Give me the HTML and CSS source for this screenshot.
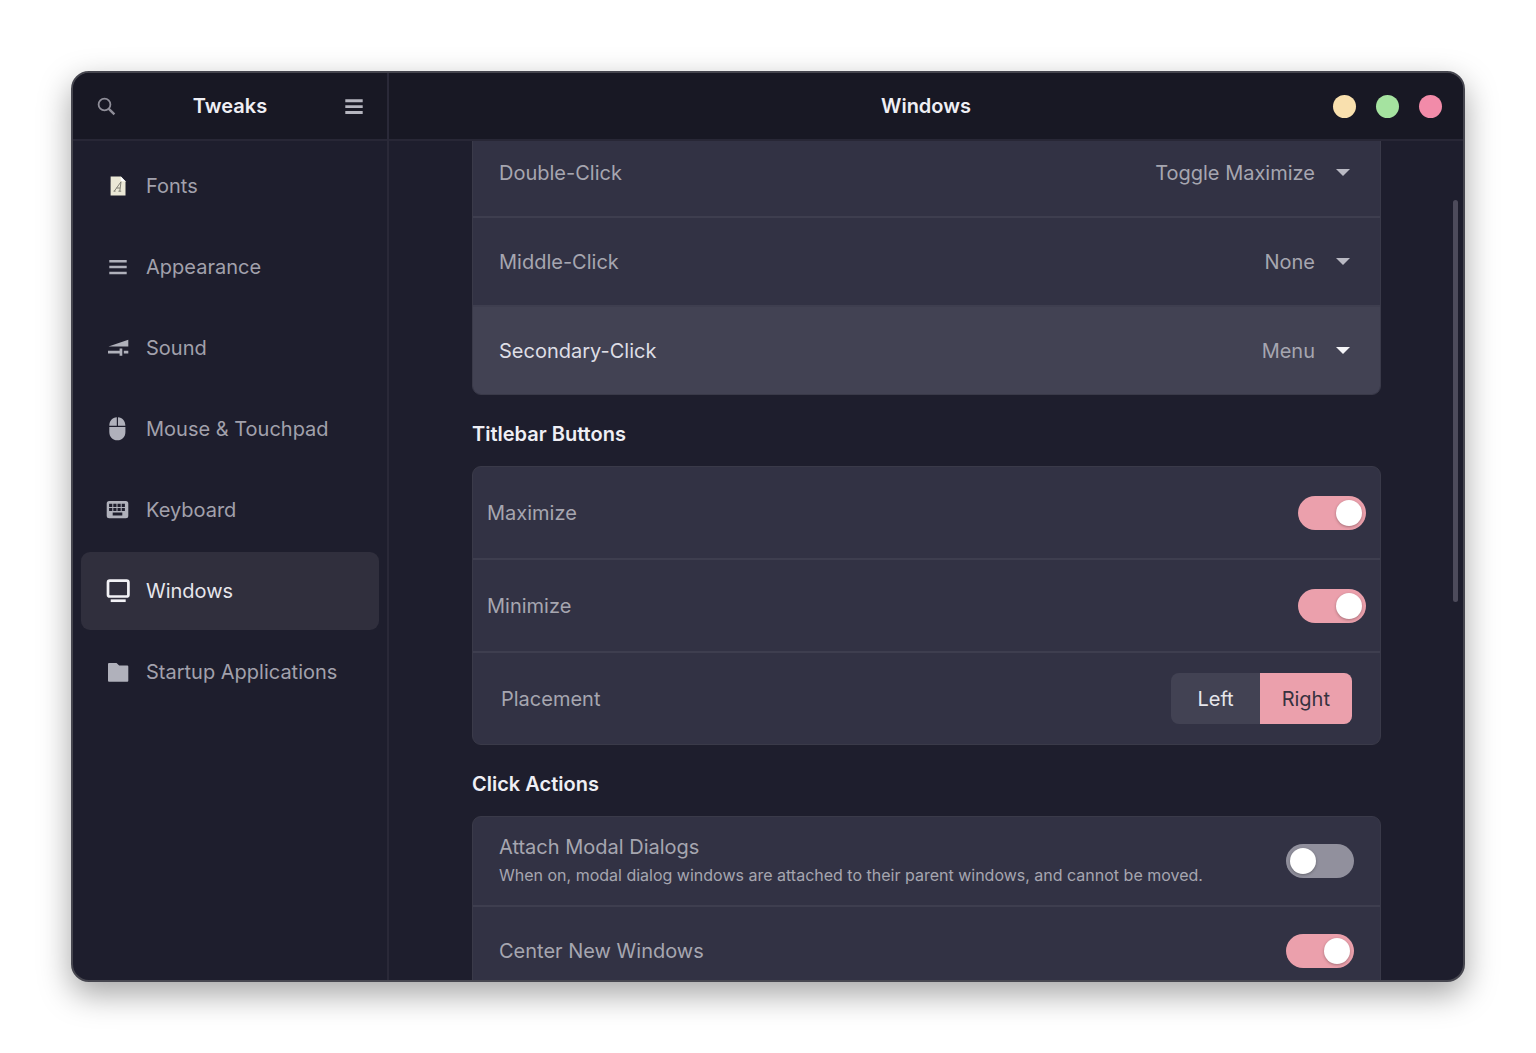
FILE: index.html
```html
<!DOCTYPE html>
<html lang="en">
<head>
  <meta charset="UTF-8" />
  <meta name="viewport" content="width=device-width, initial-scale=1.0" />
  <title>Tweaks</title>
  <link rel="stylesheet" href="styles.css">
</head>
<body>
  <div class="window">
    <aside class="sidebar">
      <header class="headerbar">
        <button class="icon-button search" type="button" aria-label="Search">
          <svg viewBox="0 0 24 24" fill="none" stroke="currentColor" stroke-width="1.8">
            <circle cx="10.5" cy="10.5" r="5.9"/>
            <path d="M14.6 14.6 20.4 20.4" stroke-width="2.4"/>
          </svg>
        </button>
        <h1>Tweaks</h1>
        <button class="icon-button menu" type="button" aria-label="Menu">
          <svg viewBox="0 0 24 24" fill="currentColor">
            <path d="M3.3 5.3h17.4v2.9H3.3zM3.3 11.2h17.4v2.9H3.3zM3.3 17.1h17.4V20H3.3z"/>
          </svg>
        </button>
      </header>
      <nav>
        <a href="#fonts">
          <svg viewBox="0 0 24 24">
            <path d="M4.6 2.6h10.2l4.7 4.7v14.3H4.6z" fill="#ebe8d6"/>
            <path d="M14.8 2.6v4.7h4.7z" fill="#fff"/>
            <path d="M7.5 17.2h2M8.4 17 15 7.8l-1.2 9.4M10.5 14h3.6M12.4 17.2h2.8" fill="none" stroke="#77766c" stroke-width="0.9"/>
          </svg>
          Fonts
        </a>
        <a href="#appearance">
          <svg viewBox="0 0 24 24" fill="currentColor">
            <path d="M3.3 4.9h17.4v2.5H3.3zM3.3 10.8h17.4v2.5H3.3zM3.3 16.7h17.4v2.5H3.3z"/>
          </svg>
          Appearance
        </a>
        <a href="#sound">
          <svg viewBox="0 0 24 24" fill="currentColor">
            <path d="M2.5 10.4 22.3 3.8v6.6zM2 14.8h11.6v-2.2h2.7v7.2h-2.7v-2.4H2zM17.8 14.8h4.5v2.6h-4.5z"/>
          </svg>
          Sound
        </a>
        <a href="#mouse">
          <svg viewBox="0 0 24 24" fill="currentColor">
            <path d="M3.3 8.8C3.4 3.8 6.3.6 10.8.3v8.5zM12 .3c4.4.3 7.2 3.5 7.4 8.5H12zM3.3 10h16.1v5c0 5-3.4 8.3-8 8.3S3.3 20 3.3 15z"/>
          </svg>
          Mouse &amp; Touchpad
        </a>
        <a href="#keyboard">
          <svg viewBox="0 0 24 24" fill="currentColor">
            <path fill-rule="evenodd" d="M3.2 3h16.6a2.5 2.5 0 0 1 2.5 2.5v12.3a2.5 2.5 0 0 1-2.5 2.5H3.2a2.5 2.5 0 0 1-2.5-2.5V5.5A2.5 2.5 0 0 1 3.2 3zM3.1 5.8v3.1h3.2V5.8zM7.3 5.8v3.1h3.2V5.8zM11.5 5.8v3.1h3.2V5.8zM15.7 5.8v3.1h3.2V5.8zM3.1 10v3h3.2v-3zM7.3 10v3h3.2v-3zM11.5 10v3h3.2v-3zM15.7 10v3h3.2v-3zM6.7 14.4v3h9.6v-3z"/>
          </svg>
          Keyboard
        </a>
        <a href="#windows" class="active" aria-current="page">
          <svg viewBox="0 0 24 24" fill="none" stroke="currentColor" stroke-width="2.7">
            <rect x="2" y="1.7" width="20.4" height="15.8" rx="1.8"/>
            <path d="M4.7 21.7h15"/>
          </svg>
          Windows
        </a>
        <a href="#startup">
          <svg viewBox="0 0 24 24" fill="currentColor">
            <path d="M3 3h7.5l2.7 2.5h8.1a1 1 0 0 1 1 1v14.2a1 1 0 0 1-1 1H3a1 1 0 0 1-1-1V4a1 1 0 0 1 1-1z"/>
          </svg>
          Startup Applications
        </a>
      </nav>
    </aside>

    <main class="main">
      <header class="headerbar">
        <h1>Windows</h1>
        <div class="window-controls">
          <button class="minimize" type="button" aria-label="Minimize window"></button>
          <button class="maximize" type="button" aria-label="Maximize window"></button>
          <button class="close" type="button" aria-label="Close window"></button>
        </div>
      </header>

      <div class="content">
        <section class="card actions">
          <div class="row">
            <label for="double-click">Double-Click</label>
            <select id="double-click">
              <option>Toggle Maximize</option>
              <option>None</option>
              <option>Menu</option>
            </select>
            <svg class="arrow" viewBox="0 0 14 8" fill="currentColor"><path d="M0 0h14L7 7z"/></svg>
          </div>
          <div class="row">
            <label for="middle-click">Middle-Click</label>
            <select id="middle-click">
              <option>Toggle Maximize</option>
              <option selected>None</option>
              <option>Menu</option>
            </select>
            <svg class="arrow" viewBox="0 0 14 8" fill="currentColor"><path d="M0 0h14L7 7z"/></svg>
          </div>
          <div class="row hover">
            <label for="secondary-click">Secondary-Click</label>
            <select id="secondary-click">
              <option>Toggle Maximize</option>
              <option>None</option>
              <option selected>Menu</option>
            </select>
            <svg class="arrow" viewBox="0 0 14 8" fill="currentColor"><path d="M0 0h14L7 7z"/></svg>
          </div>
        </section>

        <h2>Titlebar Buttons</h2>
        <section class="card buttons">
          <div class="row">
            <label for="show-maximize">Maximize</label>
            <input type="checkbox" class="switch" id="show-maximize" checked>
          </div>
          <div class="row">
            <label for="show-minimize">Minimize</label>
            <input type="checkbox" class="switch" id="show-minimize" checked>
          </div>
          <div class="row placement">
            <span class="label" id="placement-label">Placement</span>
            <div class="segmented" role="group" aria-labelledby="placement-label">
              <button type="button" aria-pressed="false">Left</button>
              <button type="button" class="selected" aria-pressed="true">Right</button>
            </div>
          </div>
        </section>

        <h2>Click Actions</h2>
        <section class="card clicks">
          <div class="row">
            <label for="attach-modal">
              Attach Modal Dialogs
              <small>When on, modal dialog windows are attached to their parent windows, and cannot be moved.</small>
            </label>
            <input type="checkbox" class="switch" id="attach-modal">
          </div>
          <div class="row">
            <label for="center-new">Center New Windows</label>
            <input type="checkbox" class="switch" id="center-new" checked>
          </div>
        </section>
        <div class="scroll-thumb"></div>
      </div>
    </main>
  </div>
</body>
</html>
```

FILE: styles.css
```css
* {
  box-sizing: border-box;
}
body {
  margin: 0;
  padding: 71px;
  background-color: #ffffff;
  color: #a6a6b0;
  font-family: 'Inter', sans-serif;
  font-size: 20px;
  line-height: 28px;
}
h1, h2 {
  margin: 0;
  color: #efeff5;
  font-size: 20px;
  font-weight: 600;
}
button, select {
  border: none;
  padding: 0;
  background: none;
  color: inherit;
  font: inherit;
}
svg {
  display: block;
  flex: none;
}

.window {
  display: flex;
  height: calc(100vh - 142px);
  border: 2px solid #46464f;
  border-radius: 18px;
  background-color: #1e1e2d;
  box-shadow: 0 12px 32px rgba(0, 0, 0, 0.36);
  overflow: hidden;
}
.headerbar {
  display: flex;
  align-items: center;
  height: 68px;
  flex: none;
  background-color: #181824;
  border-bottom: 2px solid #282736;
}

/* sidebar */
.sidebar {
  width: 316px;
  flex: none;
  border-right: 2px solid #2a2938;
}
.sidebar .headerbar {
  justify-content: space-between;
  padding: 0 21px;
}
.icon-button {
  width: 24px;
  height: 24px;
  color: #b5b5bf;
}
.icon-button.search {
  color: #8f8e99;
}
nav {
  display: flex;
  flex-direction: column;
  gap: 3px;
  padding: 6px 8px;
}
nav a {
  display: flex;
  align-items: center;
  gap: 16px;
  height: 78px;
  padding: 0 25px;
  border-radius: 9px;
  color: #a2a1ac;
  text-decoration: none;
}
nav svg {
  width: 24px;
  height: 24px;
  color: #b0b1bb;
}
nav a.active {
  background-color: #302f3d;
  color: #e6e6ec;
}
nav a.active svg {
  color: #f2f2f6;
}

/* main pane */
.main {
  display: flex;
  flex-direction: column;
  flex: 1;
  min-width: 0;
}
.main .headerbar {
  display: grid;
  grid-template-columns: 1fr auto 1fr;
  padding: 0 21px;
}
.main h1 {
  grid-column: 2;
}
.window-controls {
  display: flex;
  justify-content: flex-end;
  gap: 20px;
}
.window-controls button {
  width: 23px;
  height: 23px;
  border-radius: 50%;
}
.minimize {
  background-color: #f9e0ae;
}
.maximize {
  background-color: #a5e3a0;
}
.close {
  background-color: #f28ba9;
}

.content {
  position: relative;
  flex: 1;
  min-height: 0;
  padding: 0 82px 0 83px;
  overflow: hidden;
}
.scroll-thumb {
  position: absolute;
  top: 7%;
  right: 5px;
  width: 5px;
  height: 48%;
  border-radius: 3px;
  background-color: #4d4b5b;
}
h2 {
  margin: 25px 0 18px;
}

.card {
  border: 1px solid #3a3a49;
  border-radius: 9px;
  background-color: #323244;
  overflow: hidden;
}
.row {
  display: flex;
  align-items: center;
  box-sizing: content-box;
  border-bottom: 2px solid #3e3e4f;
}
.row:last-child {
  border-bottom: none;
}
.row label, .row .label {
  flex: 1;
}

/* list is scrolled down a little */
.actions {
  margin-top: -13px;
}
.actions .row {
  height: 87px;
  padding: 0 30px 0 26px;
}
.actions .hover {
  background-color: #424253;
}
.hover label {
  color: #dedee5;
}
.hover .arrow {
  color: #f5f5f8;
}
select {
  appearance: none;
  text-align-last: right;
}
.arrow {
  width: 14px;
  height: 8px;
  margin-left: 21px;
  color: #b9b9c3;
}

.buttons .row {
  height: 91px;
  padding: 0 14px;
}
.buttons .placement {
  padding: 0 28px;
}
.clicks .row {
  height: 88px;
  padding: 0 26px;
}
small {
  display: block;
  font-size: 16px;
}

.switch {
  appearance: none;
  width: 68px;
  height: 34px;
  margin: 0;
  padding: 4px;
  border-radius: 17px;
  background-color: #91909d;
}
.switch::before {
  content: "";
  display: block;
  width: 26px;
  height: 26px;
  border-radius: 50%;
  background-color: #ffffff;
  box-shadow: 0 1px 3px rgba(0, 0, 0, 0.3);
}
.switch:checked {
  background-color: #eba0ac;
}
.switch:checked::before {
  margin-left: auto;
}

.segmented {
  display: flex;
  border-radius: 8px;
  background-color: #424253;
  overflow: hidden;
}
.segmented button {
  height: 51px;
  padding: 0 26px;
  color: #e6e6ec;
}
.segmented .selected {
  padding: 0 22px;
  background-color: #eba0ac;
  color: #37323f;
}
```
